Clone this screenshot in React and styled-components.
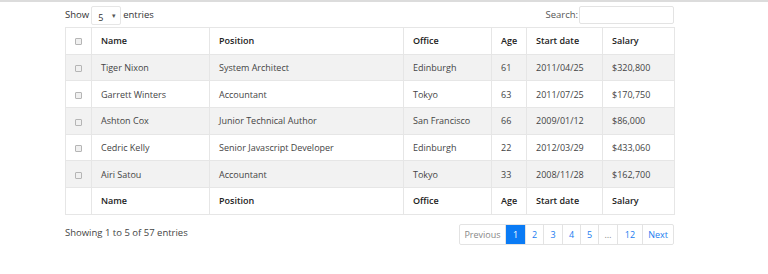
import React from 'react';
import styled, { createGlobalStyle } from 'styled-components';

const GlobalStyle = createGlobalStyle`
    body {
        margin: 0;
        background: #fff;
        font-family: "Open Sans", "Liberation Sans", sans-serif;
        color: #212529;
    }
`;

const Page = styled.div`
    border-top: 2px solid #dcdcdc;
    padding: 0 94px 0 65px;
`;

const TopBar = styled.div`
    display: flex;
    justify-content: space-between;
    align-items: center;
    height: 25px;
    font-size: 9.5px;
    color: #333;
`;

const Length = styled.label`
    display: flex;
    align-items: center;
`;

const Select = styled.span`
    display: inline-flex;
    align-items: center;
    justify-content: space-between;
    width: 30px;
    height: 19px;
    box-sizing: border-box;
    margin: 2px 2px 0 2px;
    padding: 4px 4px 0 6px;
    border: 1px solid #e6e6e6;
    border-radius: 2px;
    font-size: 9px;
    &::after {
        content: '▾';
        font-size: 7px;
        color: #555;
        margin-top: -4px;
    }
`;

const Search = styled.label`
    display: flex;
    align-items: center;
    color: #555;
`;

const SearchInput = styled.span`
    display: inline-block;
    width: 95px;
    height: 18px;
    margin-left: 1px;
    border: 1px solid #e3e3e3;
    border-radius: 2px;
    box-sizing: border-box;
`;

const Table = styled.table`
    width: 609px;
    border-collapse: collapse;
    font-size: 9px;
    table-layout: fixed;
`;

const Cell = styled.td`
    height: 25.7px;
    padding: 0 0 0 9px;
    border: 1px solid #e6e6e6;
    white-space: nowrap;
    font-weight: ${(props) => (props.head ? 600 : 400)};
    color: ${(props) => (props.head ? '#222' : '#444')};
`;

const Row = styled.tr`
    background: ${(props) => (props.striped ? '#f2f2f2' : '#fff')};
`;

const Check = styled.span`
    display: inline-block;
    width: 5px;
    height: 5px;
    border: 1px solid #b5b5b5;
    border-radius: 1px;
    background: #f0f0f0;
    vertical-align: middle;
`;

const BottomBar = styled.div`
    display: flex;
    justify-content: space-between;
    align-items: flex-start;
    padding-top: 9px;
    font-size: 9.5px;
    color: #444;
`;

const Info = styled.div`
    padding-top: 2px;
`;

const Pager = styled.div`
    display: flex;
    border: 1px solid #e3e3e3;
    border-radius: 2px;
    height: 21px;
    box-sizing: border-box;
`;

const PageLink = styled.span`
    display: flex;
    align-items: center;
    justify-content: center;
    box-sizing: border-box;
    width: ${(props) => props.w}px;
    border-left: 1px solid #e3e3e3;
    font-size: 9px;
    color: ${(props) => (props.active ? '#fff' : props.muted ? '#888' : '#1a7cf0')};
    background: ${(props) => (props.active ? '#0a7bf5' : 'transparent')};
    &:first-child {
        border-left: none;
    }
`;

const columns = [
    { key: 'check', width: 26 },
    { key: 'name', label: 'Name', width: 118 },
    { key: 'position', label: 'Position', width: 194 },
    { key: 'office', label: 'Office', width: 88 },
    { key: 'age', label: 'Age', width: 35 },
    { key: 'start', label: 'Start date', width: 76 },
    { key: 'salary', label: 'Salary', width: 72 },
];

const rows = [
    { name: 'Tiger Nixon', position: 'System Architect', office: 'Edinburgh', age: 61, start: '2011/04/25', salary: '$320,800' },
    { name: 'Garrett Winters', position: 'Accountant', office: 'Tokyo', age: 63, start: '2011/07/25', salary: '$170,750' },
    { name: 'Ashton Cox', position: 'Junior Technical Author', office: 'San Francisco', age: 66, start: '2009/01/12', salary: '$86,000' },
    { name: 'Cedric Kelly', position: 'Senior Javascript Developer', office: 'Edinburgh', age: 22, start: '2012/03/29', salary: '$433,060' },
    { name: 'Airi Satou', position: 'Accountant', office: 'Tokyo', age: 33, start: '2008/11/28', salary: '$162,700' },
];

const pages = [
    { label: 'Previous', w: 45, muted: true },
    { label: '1', w: 20, active: true },
    { label: '2', w: 18 },
    { label: '3', w: 19 },
    { label: '4', w: 18 },
    { label: '5', w: 18 },
    { label: '…', w: 19, muted: true },
    { label: '12', w: 25 },
    { label: 'Next', w: 31 },
];

const HeadRow = ({ withCheck }) => (
    <Row>
        {columns.map((c) => (
            <Cell head key={c.key}>
                {c.key === 'check' ? withCheck && <Check /> : c.label}
            </Cell>
        ))}
    </Row>
);

const App = () => (
    <Page>
        <GlobalStyle />
        <TopBar>
            <Length>
                Show <Select>5</Select> entries
            </Length>
            <Search>
                Search:<SearchInput />
            </Search>
        </TopBar>
        <Table>
            <colgroup>
                {columns.map((c) => (
                    <col key={c.key} style={{ width: c.width }} />
                ))}
            </colgroup>
            <thead>
                <HeadRow withCheck />
            </thead>
            <tbody>
                {rows.map((r, i) => (
                    <Row striped={i % 2 === 0} key={r.name}>
                        <Cell>
                            <Check />
                        </Cell>
                        <Cell>{r.name}</Cell>
                        <Cell>{r.position}</Cell>
                        <Cell>{r.office}</Cell>
                        <Cell>{r.age}</Cell>
                        <Cell>{r.start}</Cell>
                        <Cell>{r.salary}</Cell>
                    </Row>
                ))}
            </tbody>
            <tfoot>
                <HeadRow />
            </tfoot>
        </Table>
        <BottomBar>
            <Info>Showing 1 to 5 of 57 entries</Info>
            <Pager>
                {pages.map((p) => (
                    <PageLink key={p.label} w={p.w} active={p.active} muted={p.muted}>
                        {p.label}
                    </PageLink>
                ))}
            </Pager>
        </BottomBar>
    </Page>
);

export default App;
